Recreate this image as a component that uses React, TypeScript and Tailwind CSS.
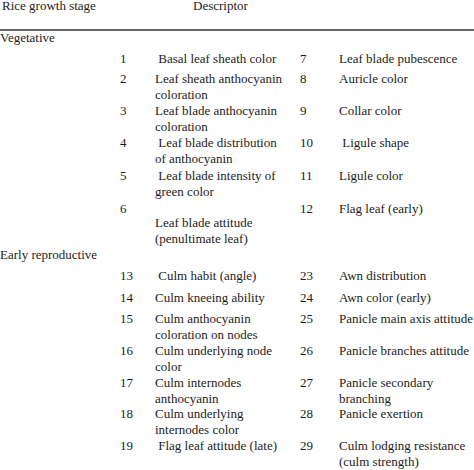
type Row = {
  top: string
  n1: string
  d1: string[]
  n2: string
  d2: string[]
  d1Offset?: string
}

const vegetative: Row[] = [
  { top: 'mt-[5px]', n1: '1', d1: ['\u00a0Basal leaf sheath color'], n2: '7', d2: ['Leaf blade pubescence'] },
  { top: 'mt-[4px]', n1: '2', d1: ['Leaf sheath anthocyanin', 'coloration'], n2: '8', d2: ['Auricle color'] },
  { top: 'mt-0', n1: '3', d1: ['Leaf blade anthocyanin', 'coloration'], n2: '9', d2: ['Collar color'] },
  { top: 'mt-0', n1: '4', d1: ['\u00a0Leaf blade distribution', 'of anthocyanin'], n2: '10', d2: ['\u00a0Ligule shape'] },
  { top: 'mt-[1px]', n1: '5', d1: ['\u00a0Leaf blade intensity of', 'green color'], n2: '11', d2: ['Ligule color'] },
  { top: 'mt-[1px]', n1: '6', d1: ['', 'Leaf blade attitude', '(penultimate leaf)'], n2: '12', d2: ['Flag leaf (early)'], d1Offset: 'mt-[-2px]' },
]

const reproductive: Row[] = [
  { top: 'mt-[5px]', n1: '13', d1: ['\u00a0Culm habit (angle)'], n2: '23', d2: ['Awn distribution'] },
  { top: 'mt-[6px]', n1: '14', d1: ['Culm kneeing ability'], n2: '24', d2: ['Awn color (early)'] },
  { top: 'mt-[5px]', n1: '15', d1: ['Culm anthocyanin', 'coloration on nodes'], n2: '25', d2: ['Panicle main axis attitude'] },
  { top: 'mt-0', n1: '16', d1: ['Culm underlying node', 'color'], n2: '26', d2: ['Panicle branches attitude'] },
  { top: 'mt-0', n1: '17', d1: ['Culm internodes', 'anthocyanin'], n2: '27', d2: ['Panicle secondary', 'branching'] },
  { top: 'mt-[-1px]', n1: '18', d1: ['Culm underlying', 'internodes color'], n2: '28', d2: ['Panicle exertion'] },
  { top: 'mt-0', n1: '19', d1: ['\u00a0Flag leaf attitude (late)'], n2: '29', d2: ['Culm lodging resistance', '(culm strength)'] },
]

const DescriptorRow = ({ row }: { row: Row }) => {
  return (
    <div className={`flex ${row.top}`}>
      <div className="w-[120px] shrink-0" />
      <div className="w-[35px] shrink-0">{row.n1}</div>
      <div className={`w-[145px] shrink-0 ${row.d1Offset ?? ''}`}>
        {row.d1.map((line, i) => (
          <div key={i} className="h-[16px] whitespace-nowrap">
            {line}
          </div>
        ))}
      </div>
      <div className="w-[39px] shrink-0">{row.n2}</div>
      <div className="flex-1">
        {row.d2.map((line, i) => (
          <div key={i} className="h-[16px] whitespace-nowrap">
            {line}
          </div>
        ))}
      </div>
    </div>
  )
}

export default function App() {
  return (
    <div
      className="h-[470px] w-[474px] overflow-hidden bg-white text-[13px] leading-[16px] text-[#1c1c1c]"
      style={{ fontFamily: '"Liberation Serif", "Times New Roman", serif' }}
    >
      {/* Header */}
      <div className="flex h-[29px] items-start leading-[12px]">
        <div className="w-[193px] shrink-0 pl-[2px]">Rice growth stage</div>
        <div>Descriptor</div>
      </div>
      <div className="h-[2px] w-full bg-[#666666]" />

      {/* Vegetative */}
      <div className="mt-[-1px] h-[16px]">Vegetative</div>
      {vegetative.map((row) => (
        <DescriptorRow key={row.n1} row={row} />
      ))}

      {/* Early reproductive */}
      <div className="mt-0 h-[16px]">Early reproductive</div>
      {reproductive.map((row) => (
        <DescriptorRow key={row.n1} row={row} />
      ))}
    </div>
  )
}
